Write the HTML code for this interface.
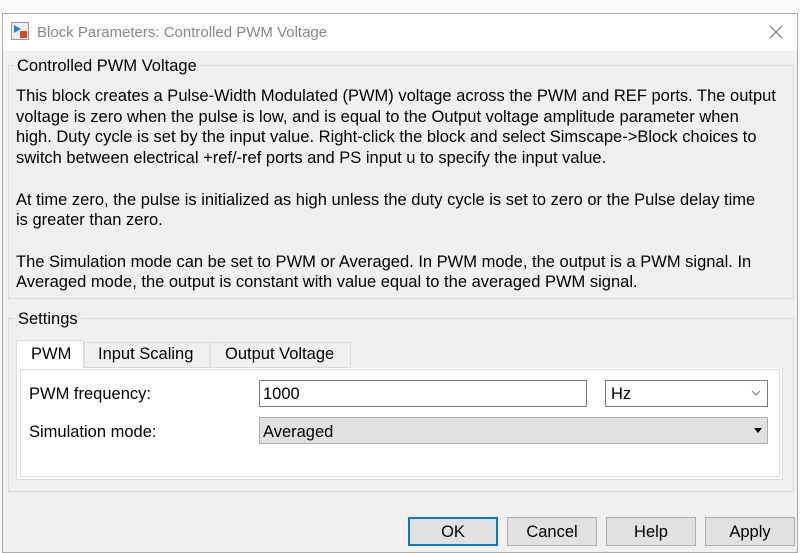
<!DOCTYPE html><html><head><style>
body{margin:0;width:800px;height:549px;background:#fafafa;position:relative;overflow:hidden;font-family:"Liberation Sans",sans-serif;color:#000}
.a{position:absolute;box-sizing:border-box}
.win{left:2px;top:13px;width:796px;height:540px;background:#f0f0f0;border:1px solid #aaa}
.title{left:3px;top:14px;width:794px;height:37px;background:#fff}
.t{position:absolute;white-space:nowrap;font-size:16.5px}
.gb{border:1px solid #dcdcdc}
.btn{background:#e1e1e1;border:1px solid #adadad;font-size:16.5px;text-align:center;line-height:28px}
</style></head><body>
<div class="a win"></div>
<div class="a title"></div>
<svg class="a" style="left:11px;top:22px" width="18" height="18"><rect x="0.5" y="0.5" width="17" height="17" fill="#eee" stroke="#999"/><path d="M3 3 L10 7 L3 11Z" fill="#2a7fd0"/><rect x="9" y="9" width="7" height="7" fill="#d24a1e"/></svg>
<div class="t" style="left:37px;top:24px;font-size:15px;color:#888">Block Parameters: Controlled PWM Voltage</div>
<svg class="a" style="left:769px;top:25px" width="14" height="14"><path d="M1 1L13 13M13 1L1 13" stroke="#777" stroke-width="1.2"/></svg>
<div class="a gb" style="left:8px;top:65px;width:786px;height:234px"></div>
<div class="t" style="left:14px;top:57px;background:#f0f0f0;padding:0 3px">Controlled PWM Voltage</div>
<div class="t" style="left:16px;top:86px;line-height:20.7px">This block creates a Pulse-Width Modulated (PWM) voltage across the PWM and REF ports. The output<br>voltage is zero when the pulse is low, and is equal to the Output voltage amplitude parameter when<br>high. Duty cycle is set by the input value. Right-click the block and select Simscape-&gt;Block choices to<br>switch between electrical +ref/-ref ports and PS input u to specify the input value.<br><br>At time zero, the pulse is initialized as high unless the duty cycle is set to zero or the Pulse delay time<br>is greater than zero.<br><br>The Simulation mode can be set to PWM or Averaged. In PWM mode, the output is a PWM signal. In<br>Averaged mode, the output is constant with value equal to the averaged PWM signal.</div>
<div class="a gb" style="left:8px;top:318px;width:786px;height:174px"></div>
<div class="t" style="left:15px;top:310px;background:#f0f0f0;padding:0 3px">Settings</div>
<div class="a" style="left:16px;top:340px;width:68px;height:30px;background:#fff;border:1px solid #dcdcdc;border-bottom:none"></div>
<div class="t" style="left:31px;top:345px">PWM</div>
<div class="a" style="left:84px;top:342px;width:126px;height:26px;background:#f0f0f0;border:1px solid #dcdcdc"></div>
<div class="t" style="left:98px;top:345px">Input Scaling</div>
<div class="a" style="left:210px;top:342px;width:141px;height:26px;background:#f0f0f0;border:1px solid #dcdcdc"></div>
<div class="t" style="left:225px;top:345px">Output Voltage</div>
<div class="a" style="left:16px;top:368px;width:767px;height:112px;background:#fff;border:1px solid #dcdcdc;border-top:none"></div>
<div class="a" style="left:20px;top:369px;width:760px;height:108px;border:1px solid #dcdcdc"></div>
<div class="t" style="left:29px;top:385px">PWM frequency:</div>
<div class="a" style="left:259px;top:380px;width:328px;height:27px;background:#fff;border:1px solid #7a7a7a"></div>
<div class="t" style="left:263px;top:385px">1000</div>
<div class="a" style="left:605px;top:380px;width:163px;height:27px;background:#fff;border:1px solid #7a7a7a"></div>
<div class="t" style="left:611px;top:385px">Hz</div>
<svg class="a" style="left:751px;top:390px" width="10" height="6"><path d="M1 1L5 5L9 1" stroke="#777" fill="none"/></svg>
<div class="t" style="left:29px;top:423px">Simulation mode:</div>
<div class="a" style="left:259px;top:417px;width:509px;height:27px;background:#e1e1e1;border:1px solid #adadad"></div>
<div class="t" style="left:263px;top:423px">Averaged</div>
<svg class="a" style="left:754px;top:428px" width="8" height="5"><path d="M0 0H8L4 5Z" fill="#000"/></svg>
<div class="a btn" style="left:408px;top:517px;width:90px;height:29px;border:2px solid #0078d7;line-height:27px">OK</div>
<div class="a btn" style="left:507px;top:517px;width:90px;height:29px">Cancel</div>
<div class="a btn" style="left:606px;top:517px;width:90px;height:29px">Help</div>
<div class="a btn" style="left:705px;top:517px;width:90px;height:29px">Apply</div>
</body></html>
